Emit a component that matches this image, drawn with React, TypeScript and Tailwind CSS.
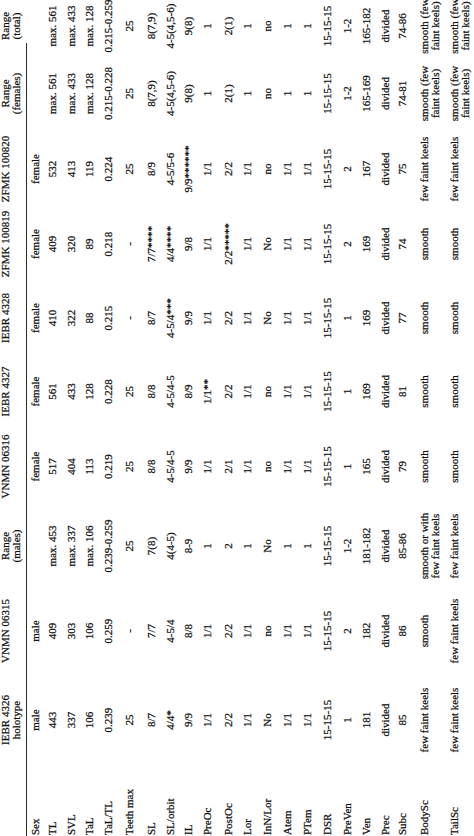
import React from "react";

const widths = [
  "w-[71px]",
  "w-[90px]",
  "w-[88px]",
  "w-[82px]",
  "w-[77px]",
  "w-[73px]",
  "w-[74px]",
  "w-[74px]",
  "w-[76px]",
  "w-[75px]",
  "w-[60px]",
];

const headers = [
  "",
  "IEBR 4326\nholotype",
  "VNMN 06315",
  "Range\n(males)",
  "VNMN 06316",
  "IEBR 4327",
  "IEBR 4328",
  "ZFMK 100819",
  "ZFMK 100820",
  "Range\n(females)",
  "Range\n(total)",
];

type Row = { h: string; cells: string[] };

const rows: Row[] = [
  { h: "h-[17px]", cells: ["Sex", "male", "male", "", "female", "female", "female", "female", "female", "", ""] },
  { h: "h-[19px]", cells: ["TL", "443", "409", "max. 453", "517", "561", "410", "409", "532", "max. 561", "max. 561"] },
  { h: "h-[18px]", cells: ["SVL", "337", "303", "max. 337", "404", "433", "322", "320", "413", "max. 433", "max. 433"] },
  { h: "h-[19px]", cells: ["TaL", "106", "106", "max. 106", "113", "128", "88", "89", "119", "max. 128", "max. 128"] },
  { h: "h-[21px]", cells: ["TaL/TL", "0.239", "0.259", "0.239-0.259", "0.219", "0.228", "0.215", "0.218", "0.224", "0.215-0.228", "0.215-0.259"] },
  { h: "h-[22px]", cells: ["Teeth max", "25", "-", "25", "25", "25", "-", "-", "25", "25", "25"] },
  { h: "h-[19px]", cells: ["SL", "8/7", "7/7", "7(8)", "8/8", "8/8", "8/7", "7/7****", "8/9", "8(7,9)", "8(7,9)"] },
  { h: "h-[18px]", cells: ["SL/orbit", "4/4*", "4-5/4", "4(4-5)", "4-5/4-5", "4-5/4-5", "4-5/4***", "4/4****", "4-5/5-6", "4-5(4,5-6)", "4-5(4,5-6)"] },
  { h: "h-[19px]", cells: ["IL", "9/9", "8/8", "8-9", "9/9", "8/9", "9/9", "9/8", "9/9******", "9(8)", "9(8)"] },
  { h: "h-[21px]", cells: ["PreOc", "1/1", "1/1", "1", "1/1", "1/1**", "1/1", "1/1", "1/1", "1", "1"] },
  { h: "h-[19px]", cells: ["PostOc", "2/2", "2/2", "2", "2/1", "2/2", "2/2", "2/2*****", "2/2", "2(1)", "2(1)"] },
  { h: "h-[20px]", cells: ["Lor", "1/1", "1/1", "1", "1/1", "1/1", "1/1", "1/1", "1/1", "1", "1"] },
  { h: "h-[20px]", cells: ["InN/Lor", "No", "no", "No", "no", "no", "No", "No", "no", "no", "no"] },
  { h: "h-[20px]", cells: ["Atem", "1/1", "1/1", "1", "1/1", "1/1", "1/1", "1/1", "1/1", "1", "1"] },
  { h: "h-[20px]", cells: ["PTem", "1/1", "1/1", "1", "1/1", "1/1", "1/1", "1/1", "1/1", "1", "1"] },
  { h: "h-[20px]", cells: ["DSR", "15-15-15", "15-15-15", "15-15-15", "15-15-15", "15-15-15", "15-15-15", "15-15-15", "15-15-15", "15-15-15", "15-15-15"] },
  { h: "h-[19px]", cells: ["PreVen", "1", "2", "1-2", "1", "1", "1", "2", "2", "1-2", "1-2"] },
  { h: "h-[19px]", cells: ["Ven", "181", "182", "181-182", "165", "169", "169", "169", "167", "165-169", "165-182"] },
  { h: "h-[17px]", cells: ["Prec", "divided", "divided", "divided", "divided", "divided", "divided", "divided", "divided", "divided", "divided"] },
  { h: "h-[22px]", cells: ["Subc", "85", "86", "85-86", "79", "81", "77", "74", "75", "74-81", "74-86"] },
  { h: "h-[30px]", cells: ["BodySc", "few faint keels", "smooth", "smooth or with\nfew faint keels", "smooth", "smooth", "smooth", "smooth", "few faint keels", "smooth (few\nfaint keels)", "smooth (few\nfaint keels)"] },
  { h: "h-[25px]", cells: ["TailSc", "few faint keels", "few faint keels", "few faint keels", "smooth", "smooth", "smooth", "smooth", "few faint keels", "smooth (few\nfaint keels)", "smooth (few\nfaint keels)"] },
];

export default function App() {
  return (
    <div className="relative w-[474px] h-[836px] overflow-hidden bg-white">
      <div className="w-[836px] h-[474px] origin-top-left [transform:translateY(836px)_rotate(-90deg)] font-['Liberation_Serif',serif] text-[11px] text-[#111] [-webkit-text-stroke:0.25px_#111]">
        <div className="flex h-[26px] leading-[11px]">
          {headers.map((t, i) => (
            <div key={i} className={`${widths[i]} shrink-0 text-center whitespace-pre-line`}>
              {t}
            </div>
          ))}
        </div>
        <div className="h-px w-[793px] bg-[#2a2a2a]" />
        <div className="flex flex-col pt-[3px] leading-[11px]">
          {rows.map((r, ri) => (
            <div key={ri} className={`flex ${r.h}`}>
              {r.cells.map((c, ci) => (
                <div
                  key={ci}
                  className={`${widths[ci]} shrink-0 whitespace-pre-line ${ci === 0 ? "text-left pl-px" : "text-center"}`}
                >
                  {c}
                </div>
              ))}
            </div>
          ))}
        </div>
      </div>
    </div>
  );
}
